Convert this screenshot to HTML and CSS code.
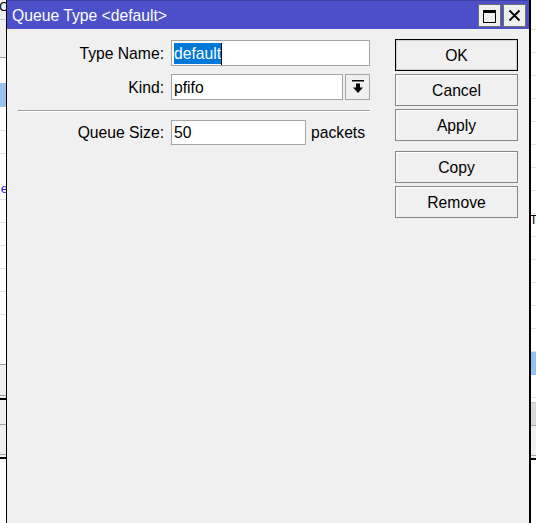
FILE: index.html
```html
<!DOCTYPE html>
<html>
<head>
<meta charset="utf-8">
<title>Queue Type &lt;default&gt;</title>
<link rel="stylesheet" href="styles.css">
</head>
<body>
<div class="screen">
  <div class="strip strip-left">
    <div class="lrow l-head"><span class="hdr-text">C</span></div>
    <div class="lrow l-head2"></div>
    <div class="lrow l-plain25"></div>
    <div class="lrow l-sel"></div>
    <div class="lrow l-line24"></div>
    <div class="lrow l-line"></div>
    <div class="lrow l-tall"><span class="blue-e">e</span></div>
    <div class="lrow l-line"></div>
    <div class="lrow l-line"></div>
    <div class="lrow l-line"></div>
    <div class="lrow l-line"></div>
    <div class="lrow l-line"></div>
    <div class="lrow l-blank"></div>
    <div class="lrow g-31"></div>
    <div class="lrow g-black3"></div>
    <div class="lrow g-26"></div>
    <div class="lrow g-30"></div>
    <div class="lrow g-black4"></div>
    <div class="lrow l-rest"></div>
  </div>

  <div class="dialog">
    <div class="titlebar">
      <span class="title">Queue Type &lt;default&gt;</span>
      <div class="title-btns">
        <div class="tbtn">
          <svg width="21" height="21" viewBox="0 0 21 21">
            <rect x="4.5" y="5.5" width="12" height="12" fill="none" stroke="#000" stroke-width="1"/>
            <rect x="4" y="5" width="13" height="3" fill="#000"/>
          </svg>
        </div>
        <div class="tbtn">
          <svg width="21" height="21" viewBox="0 0 21 21">
            <path d="M5.5 5.5 L15.5 15.5 M15.5 5.5 L5.5 15.5" stroke="#000" stroke-width="1.8" fill="none"/>
          </svg>
        </div>
      </div>
    </div>

    <div class="dlg-body">
      <div class="form">
        <div class="frow">
          <label class="flabel">Type Name:</label>
          <div class="field field-name"><span class="sel">default</span><span class="caret"></span></div>
        </div>
        <div class="frow">
          <label class="flabel">Kind:</label>
          <div class="combo">
            <div class="field field-kind">pfifo</div>
            <div class="dd-btn">
              <svg width="23" height="24" viewBox="0 0 23 24">
                <rect x="6" y="5" width="12" height="1.5" fill="#000"/>
                <rect x="10" y="8.5" width="4" height="4.5" fill="#000"/>
                <polygon points="7,12.5 17,12.5 12,18" fill="#000"/>
              </svg>
            </div>
          </div>
        </div>
        <div class="sep"></div>
        <div class="frow frow-size">
          <label class="flabel">Queue Size:</label>
          <div class="field field-size">50</div>
          <span class="unit">packets</span>
        </div>
      </div>

      <div class="btns">
        <div class="btn-group">
          <div class="btn btn-default">OK</div>
          <div class="btn">Cancel</div>
          <div class="btn">Apply</div>
        </div>
        <div class="btn-group">
          <div class="btn">Copy</div>
          <div class="btn">Remove</div>
        </div>
      </div>
    </div>
  </div>

  <div class="strip strip-right">
    <div class="rrow r-top"></div>
    <div class="rrow r-line"></div>
    <div class="rrow r-line"></div>
    <div class="rrow r-line"></div>
    <div class="rrow r-line"></div>
    <div class="rrow r-line"></div>
    <div class="rrow r-line"></div>
    <div class="rrow r-line"></div>
    <div class="rrow r-line"></div>
    <div class="rrow r-line"><span class="r-t">T</span></div>
    <div class="rrow r-line"></div>
    <div class="rrow r-line"></div>
    <div class="rrow r-line"></div>
    <div class="rrow r-line"></div>
    <div class="rrow r-line"></div>
    <div class="rrow r-sel"></div>
    <div class="rrow r-line"></div>
    <div class="rrow r-gap4"></div>
    <div class="rrow r-hdr"></div>
    <div class="rrow r-30"></div>
    <div class="rrow r-black4"></div>
    <div class="rrow r-rest"></div>
  </div>
</div>
</body>
</html>
```

FILE: styles.css
```css
* { box-sizing: border-box; }

html, body {
  margin: 0;
  padding: 0;
  width: 536px;
  height: 523px;
  overflow: hidden;
  background: #ffffff;
  font-family: "Liberation Sans", Arial, sans-serif;
  font-size: 15.7px;
  color: #000;
}

.screen {
  display: flex;
  width: 536px;
  height: 523px;
}

/* ---------- background windows (left/right strips) ---------- */
.strip {
  display: flex;
  flex-direction: column;
  overflow: hidden;
  background: #fff;
}
.strip-left { width: 6px; }
.strip-right { width: 5px; }

.lrow, .rrow { flex: none; overflow: hidden; white-space: nowrap; }

.l-head {
  height: 20px;
  background: #f0f0f0;
  border-bottom: 1px solid #c8c8c8;
  font-size: 13px;
  line-height: 14px;
}
.hdr-text { display: block; margin-left: -1px; }
.l-head2 { height: 38px; background: #f0f0f0; border-bottom: 1px solid #a0a0a0; }
.l-plain25 { height: 25px; }
.l-sel { height: 24px; background: #99c1ee; }
.l-line24 { height: 24px; border-bottom: 1px solid #e2e2e2; }
.l-line { height: 23px; border-bottom: 1px solid #e2e2e2; }
.l-tall {
  height: 46px;
  border-bottom: 1px solid #e2e2e2;
  font-size: 13px;
  line-height: 13px;
  padding-top: 28px;
  text-align: right;
}
.blue-e { color: #2a2ad8; display: inline-block; margin-right: -2px; }
.l-blank { height: 50px; border-bottom: 1px solid #a0a0a0; }
.g-31 { height: 31px; background: #f0f0f0; border-bottom: 1px solid #a0a0a0; }
.g-black3 { height: 4px; background: #f0f0f0; border-bottom: 2px solid #000; }
.g-26 { height: 25px; background: #f0f0f0; border-bottom: 1px solid #a0a0a0; }
.g-30 { height: 30px; background: #f0f0f0; border-bottom: 1px solid #a0a0a0; }
.g-black4 { height: 4px; background: #f0f0f0; border-bottom: 2px solid #000; }
.l-rest { flex: 1; background: #fff; }

.r-top { height: 30px; border-bottom: 1px solid #e2e2e2; }
.r-line { height: 23px; border-bottom: 1px solid #e2e2e2; }
.r-t { display: block; font-size: 12px; line-height: 12px; padding-top: 0; margin-left: -1px; }
.r-sel { height: 23px; background: #99c1ee; }
.r-gap4 { height: 4px; }
.r-hdr { height: 24px; background: #d8d8d8; border-bottom: 1px solid #a0a0a0; border-top: 1px solid #c4c4c4; }
.r-30 { height: 30px; background: #f0f0f0; border-bottom: 1px solid #a0a0a0; }
.r-black4 { height: 4px; background: #f0f0f0; border-bottom: 2px solid #000; }
.r-rest { flex: 1; background: #fff; }

/* ---------- dialog window ---------- */
.dialog {
  width: 525px;
  height: 523px;
  flex: none;
  background: #f0f0f0;
  border-left: 1px solid #000;
  border-right: 2px solid #000;
  display: flex;
  flex-direction: column;
}

.titlebar {
  height: 29px;
  background: #4c50c9;
  border-top: 1px solid #3c40a8;
  display: flex;
  align-items: flex-start;
  justify-content: space-between;
  flex: none;
}
.title {
  color: #fff;
  font-size: 15.7px;
  line-height: 18px;
  padding-top: 6px;
  padding-left: 5px;
  white-space: nowrap;
}
.title-btns {
  display: flex;
  gap: 2px;
  margin-top: 3px;
  margin-right: 3px;
}
.tbtn {
  width: 23px;
  height: 23px;
  background: #efefef;
  border: 1px solid #6e6e6e;
  display: flex;
  align-items: center;
  justify-content: center;
}
.tbtn svg { display: block; }

.dlg-body {
  display: flex;
  padding-top: 10px;
  padding-left: 11px;
}

.form {
  width: 352px;
  padding-top: 1px;
  display: flex;
  flex-direction: column;
}

.frow {
  display: flex;
  align-items: center;
  height: 26px;
  gap: 7px;
}
.frow + .frow { margin-top: 8px; }

.flabel {
  width: 146px;
  text-align: right;
  white-space: nowrap;
  padding-top: 1px;
}

.field {
  height: 26px;
  background: #fff;
  border: 1px solid #a5a5a5;
  padding-left: 2px;
  padding-top: 1px;
  display: flex;
  align-items: center;
  white-space: nowrap;
}
.field-name { width: 199px; }
.sel {
  background: #0078d7;
  color: #fff;
  line-height: 21px;
  height: 21px;
}
.caret {
  width: 1px;
  height: 22px;
  background: #000;
}

.combo {
  display: flex;
  gap: 2px;
  width: 199px;
}
.field-kind { flex: 1; }
.dd-btn {
  width: 25px;
  height: 26px;
  background: #f0f0f0;
  border: 1px solid #a5a5a5;
  display: flex;
  align-items: center;
  justify-content: center;
}
.dd-btn svg { display: block; }

.sep {
  margin: 10px 0 8px;
  height: 2px;
  border-top: 1px solid #a0a0a0;
  border-bottom: 1px solid #ffffff;
}

.frow-size { height: 25px; gap: 0; }
.frow-size .flabel { margin-right: 7px; }
.field-size { width: 135px; height: 25px; }
.unit { margin-left: 5px; white-space: nowrap; padding-top: 1px; }

.btns {
  margin-left: 25px;
  width: 123px;
  display: flex;
  flex-direction: column;
  gap: 10px;
}
.btn-group {
  display: flex;
  flex-direction: column;
  gap: 3px;
}
.btn {
  height: 32px;
  background: #f0f0f0;
  border: 1px solid #858585;
  box-shadow: inset 1px 1px 0 #ffffff;
  display: flex;
  align-items: center;
  justify-content: center;
  white-space: nowrap;
  padding-top: 1px;
}
.btn-default {
  border: 1px solid #000;
  box-shadow: inset 0 0 0 1px #cfcfcf;
}
```
